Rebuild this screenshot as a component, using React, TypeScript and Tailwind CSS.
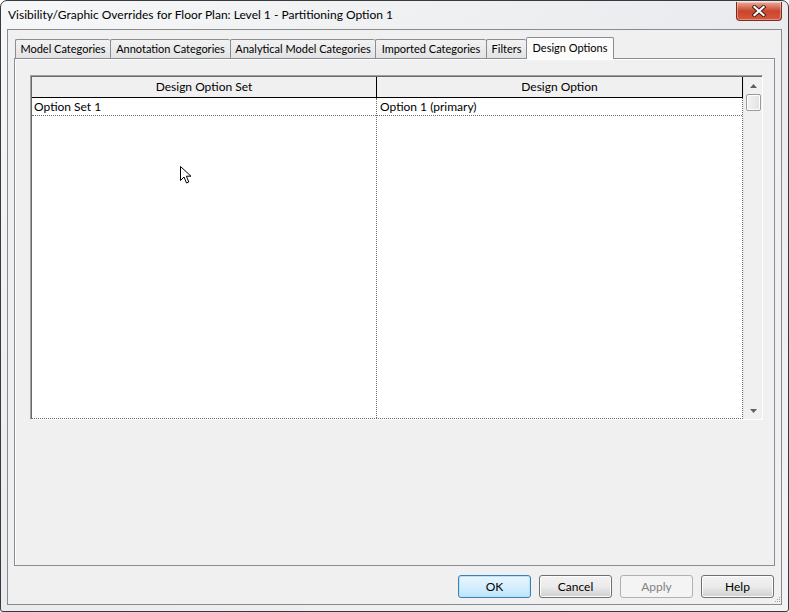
import React from "react";

const TABS = [
  { label: "Model Categories", w: "w-[95px]" },
  { label: "Annotation Categories", w: "w-[120px]" },
  { label: "Analytical Model Categories", w: "w-[145px]" },
  { label: "Imported Categories", w: "w-[111px]" },
  { label: "Filters", w: "w-[40px]" },
];

function CloseButton() {
  return (
    <div className="mt-[1px] w-[46px] h-[19px] rounded-b-[4px] border border-t-0 border-[#7a2a1e] bg-gradient-to-b from-[#e9a797] via-[#c9462c] to-[#d9573b] flex items-center justify-center shadow-[inset_0_0_0_1px_rgba(255,255,255,0.35)]">
      <svg width="16" height="12" viewBox="0 0 16 12">
        <path
          d="M3.5 2 L12.5 10 M12.5 2 L3.5 10"
          stroke="#3b1d18"
          strokeWidth="4"
          fill="none"
          strokeLinecap="square"
        />
        <path
          d="M3.5 2 L12.5 10 M12.5 2 L3.5 10"
          stroke="#ffffff"
          strokeWidth="2.2"
          fill="none"
          strokeLinecap="square"
        />
      </svg>
    </div>
  );
}

function Button({ label, variant }: { label: string; variant?: "default" | "disabled" }) {
  const base =
    "w-[73px] h-[23px] rounded-[3px] border text-[12px] flex items-center justify-center";
  if (variant === "default") {
    return (
      <div className={`${base} border-[#3c7fb1] bg-gradient-to-b from-[#eaf6fd] to-[#bee6fd] shadow-[inset_0_0_0_1px_#b8e4fb] text-black`}>
        {label}
      </div>
    );
  }
  if (variant === "disabled") {
    return (
      <div className={`${base} border-[#adb2b5] bg-[#f4f4f4] text-[#838383]`}>{label}</div>
    );
  }
  return (
    <div className={`${base} border-[#707070] bg-gradient-to-b from-[#f2f2f2] via-[#ebebeb] to-[#cfcfcf] shadow-[inset_0_0_0_1px_#fcfcfc] text-black`}>
      {label}
    </div>
  );
}

function Cursor() {
  return (
    <svg
      className="absolute left-[179px] top-[165px]"
      width="14"
      height="20"
      viewBox="0 0 14 20"
    >
      <path
        d="M1.5 1.5 L1.5 15.5 L5 12 L7.5 18 L9.8 17 L7.4 11.2 L12 11.2 Z"
        fill="#fff"
        stroke="#000"
        strokeWidth="1"
        strokeLinejoin="miter"
      />
    </svg>
  );
}

function Scrollbar() {
  return (
    <div className="w-[19px] bg-[#f0f0f0] border-l border-[#e8e8e8] flex flex-col items-center">
      <div className="h-[17px] w-full flex items-center justify-center">
        <svg width="7" height="4" viewBox="0 0 7 4">
          <path d="M0 4 L3.5 0 L7 4 Z" fill="#606060" />
        </svg>
      </div>
      <div className="w-[15px] h-[17px] rounded-[2px] border border-[#9a9a9a] bg-gradient-to-r from-[#f3f3f3] to-[#e2e2e2] shadow-[inset_0_0_0_1px_#fff]" />
      <div className="flex-1" />
      <div className="h-[17px] w-full flex items-center justify-center">
        <svg width="7" height="4" viewBox="0 0 7 4">
          <path d="M0 0 L7 0 L3.5 4 Z" fill="#606060" />
        </svg>
      </div>
    </div>
  );
}

function Grid() {
  return (
    <div className="ml-[15px] mt-[16px] w-[733px] h-[345px] border-t border-l border-[#a0a0a0] border-r border-b border-r-white border-b-white">
      <div className="h-full flex border-t border-l border-[#696969] bg-white">
        <div className="flex-1 flex flex-col">
          {/* Header */}
          <div className="h-[21px] flex bg-[#f0f0f0] border-b border-black text-[12px] text-black">
            <div className="w-[345px] flex items-center justify-center border-r border-black">
              Design Option Set
            </div>
            <div className="flex-1 flex items-center justify-center border-r border-black">
              Design Option
            </div>
          </div>
          {/* Body */}
          <div className="flex-1 flex border-r border-b border-dotted border-[#6d6d6d] text-[12px] text-black">
            <div className="w-[345px] border-r border-dotted border-[#6d6d6d] flex flex-col">
              <div className="h-[18px] pl-[2px] flex items-center border-b border-dotted border-[#6d6d6d]">
                Option Set 1
              </div>
            </div>
            <div className="flex-1 flex flex-col">
              <div className="h-[18px] pl-[3px] flex items-center border-b border-dotted border-[#6d6d6d]">
                Option 1 (primary)
              </div>
            </div>
          </div>
        </div>
        <Scrollbar />
      </div>
    </div>
  );
}

export default function App() {
  return (
    <div className="relative w-[789px] h-[612px] bg-white font-['Lato','Liberation_Sans',sans-serif]">
      <div className="w-full h-full flex flex-col px-[6px] pb-[6px] border border-[#3a3a3a] rounded-t-[7px] rounded-b-[3px] bg-gradient-to-br from-[#f6f7f8] via-[#e9ebee] to-[#f2f3f4]">
        {/* Title bar */}
        <div className="h-[28px] flex items-start justify-between">
          <div className="pl-[1px] h-[27px] flex items-center text-[12px] text-black whitespace-nowrap">
            Visibility/Graphic Overrides for Floor Plan: Level 1 - Partitioning Option 1
          </div>
          <CloseButton />
        </div>

        {/* Client area */}
        <div className="flex-1 flex flex-col border border-[#8a8a8a] bg-[#f0f0f0] px-[6px] pt-[7px] pb-[5px]">
          {/* Tabs */}
          <div className="h-[21px] flex items-end pl-[1px] text-[11px] text-black whitespace-nowrap">
            {TABS.map((t) => (
              <div
                key={t.label}
                className={`${t.w} h-[19px] border border-r-0 border-b-0 border-[#898c95] rounded-t-[2px] bg-gradient-to-b from-[#f2f2f2] to-[#e3e3e3] flex items-center justify-center shrink-0`}
              >
                {t.label}
              </div>
            ))}
            <div className="relative z-10 -mb-[1px] w-[88px] h-[22px] border border-b-0 border-[#898c95] rounded-t-[2px] bg-[#fbfbfb] flex items-start justify-center pt-[2px] shrink-0">
              Design Options
            </div>
          </div>

          {/* Tab panel */}
          <div className="h-[508px] border border-[#898c95] bg-[#f0f0f0] shadow-[inset_1px_1px_0_#fff]">
            <Grid />
          </div>

          {/* Buttons */}
          <div className="mt-[9px] flex justify-end gap-[8px] pr-[1px]">
            <Button label="OK" variant="default" />
            <Button label="Cancel" />
            <Button label="Apply" variant="disabled" />
            <Button label="Help" />
          </div>
        </div>
      </div>

      {/* Resize grip */}
      <div className="absolute left-[775px] top-[597px] grid grid-cols-3 gap-[1px]">
        {[0, 1, 2, 3, 4, 5, 6, 7, 8].map((i) => (
          <div
            key={i}
            className={`w-[1px] h-[1px] ${i === 0 || i === 1 || i === 3 ? "bg-transparent" : "bg-[#a0a0a0]"}`}
          />
        ))}
      </div>

      <Cursor />
    </div>
  );
}
